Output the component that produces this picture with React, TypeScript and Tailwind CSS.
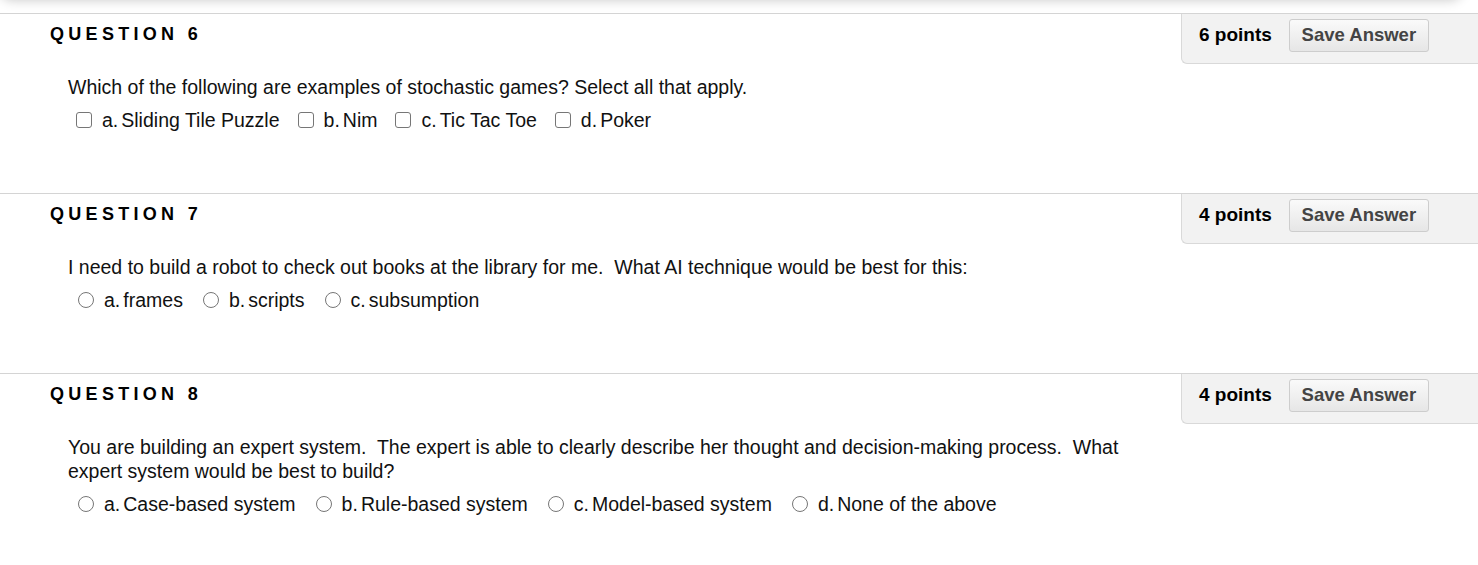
import React from 'react';

type Kind = 'checkbox' | 'radio';

interface Question {
  num: number;
  points: number;
  text: string;
  kind: Kind;
  options: string[];
}

const questions: Question[] = [
  {
    num: 6,
    points: 6,
    text: 'Which of the following are examples of stochastic games? Select all that apply.',
    kind: 'checkbox',
    options: ['Sliding Tile Puzzle', 'Nim', 'Tic Tac Toe', 'Poker'],
  },
  {
    num: 7,
    points: 4,
    text: 'I need to build a robot to check out books at the library for me.\u00a0 What AI technique would be best for this:',
    kind: 'radio',
    options: ['frames', 'scripts', 'subsumption'],
  },
  {
    num: 8,
    points: 4,
    text: 'You are building an expert system.\u00a0 The expert is able to clearly describe her thought and decision-making process.\u00a0 What expert system would be best to build?',
    kind: 'radio',
    options: ['Case-based system', 'Rule-based system', 'Model-based system', 'None of the above'],
  },
];

const letters = ['a', 'b', 'c', 'd'];

function Box({ kind }: { kind: Kind }) {
  if (kind === 'checkbox') {
    return (
      <span className="ml-[8px] mr-[10px] w-[16px] h-[16px] rounded-[3px] border-[1.5px] border-[#767676] bg-white shrink-0" />
    );
  }
  return <span className="ml-[10px] mr-[10px] w-[16px] h-[16px] rounded-full border border-[#767676] bg-white shrink-0" />;
}

function QuestionBlock({ q }: { q: Question }) {
  return (
    <section className="border-t border-[#d4d4d4] pb-[61px]">
      <div className="flex items-start justify-between">
        <h2 className="pl-[50px] pt-[7px] text-[18px] font-bold tracking-[4.3px] text-black">
          QUESTION {q.num}
        </h2>
        <div className="w-[297px] h-[50px] pb-[7px] flex items-center bg-[#f2f2f2] border-l border-b border-[#d9d9d9] rounded-bl-[6px]">
          <span className="pl-[17px] text-[19px] font-bold text-black">{q.points} points</span>
          <button className="ml-[17px] w-[140px] h-[33px] rounded-[3px] border border-[#cdcdcd] bg-gradient-to-b from-[#fafafa] to-[#e6e6e6] text-[18.5px] font-bold text-[#444]">
            Save Answer
          </button>
        </div>
      </div>
      <p className="mt-[11px] pl-[68px] w-[1140px] text-[19.5px] leading-[24px] text-[#111]">{q.text}</p>
      <div className="mt-[9px] pl-[68px] flex items-center text-[19.5px] leading-[24px] text-[#111]">
        {q.options.map((opt, i) => (
          <label key={opt} className="flex items-center mr-[10px]">
            <Box kind={q.kind} />
            <span className="mr-[3px]">{letters[i]}.</span>
            <span>{opt}</span>
          </label>
        ))}
      </div>
    </section>
  );
}

export default function App() {
  return (
    <div className="min-h-screen bg-white font-['Liberation_Sans',Arial,sans-serif]">
      <div className="h-[13px] flex flex-col">
        <div className="-mt-[20px] h-[20px] mr-[16px] bg-white rounded-b-[12px] shadow-[0_0_12px_rgba(0,0,0,0.22)]" />
      </div>
      {questions.map((q) => (
        <QuestionBlock key={q.num} q={q} />
      ))}
    </div>
  );
}
